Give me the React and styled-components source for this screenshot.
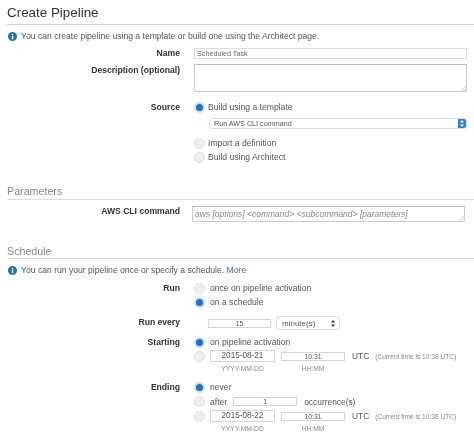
import React from 'react';
import styled, { createGlobalStyle } from 'styled-components';

const GlobalStyle = createGlobalStyle`
  html, body {
    margin: 0;
    padding: 0;
    background: #fff;
    overflow: hidden;
  }
`;

const Page = styled.div`
  width: 474px;
  height: 436px;
  overflow: hidden;
  padding-left: 7px;
  box-sizing: border-box;
  font-family: 'Liberation Sans', Arial, sans-serif;
  font-size: 8.5px;
  color: #444;
  filter: blur(0.35px);
`;

const Title = styled.h1`
  margin: 0;
  height: 25px;
  box-sizing: border-box;
  padding-top: 4px;
  font-size: 13.4px;
  line-height: 17px;
  font-weight: 400;
  color: #333;
  border-bottom: 1px solid #cfcfcf;
`;

const SectionTitle = styled.h2`
  margin: ${(p) => p.$top}px 0 0;
  height: ${(p) => p.$height || 14}px;
  font-size: 10.7px;
  line-height: 13px;
  font-weight: 400;
  color: #888;
  border-bottom: 1px solid #ddd;
`;

const Info = styled.div`
  display: flex;
  align-items: center;
  gap: 4px;
  height: 12px;
  margin-top: ${(p) => p.$top}px;
  padding-left: 1px;
  font-size: 8.6px;
  color: #555;
`;

const More = styled.span`
  color: #3f6fa8;
`;

const Row = styled.div`
  display: grid;
  grid-template-columns: 173px 1fr;
  column-gap: 14px;
  margin-top: ${(p) => p.$top || 0}px;
`;

const Label = styled.div`
  text-align: right;
  font-weight: 700;
  font-size: 8.6px;
  line-height: ${(p) => p.$line || 14}px;
  color: #333;
`;

const Stack = styled.div`
  display: flex;
  flex-direction: column;
  min-width: 0;
`;

const TextInput = styled.div`
  box-sizing: border-box;
  width: 273px;
  height: 11px;
  margin-top: 1px;
  padding-left: 2px;
  border: 1px solid #ddd;
  font-size: 7.2px;
  line-height: 9px;
  color: #666;
`;

const TextArea = styled.div`
  box-sizing: border-box;
  position: relative;
  width: 273px;
  height: ${(p) => p.$height}px;
  margin-left: ${(p) => p.$shift || 0}px;
  padding: 3px 2px;
  border: 1px solid #ccc;
  border-top-color: #bbb;
  font-size: 8.5px;
  font-style: italic;
  line-height: 8px;
  color: #888;
`;

const Grip = styled.svg`
  position: absolute;
  right: 0;
  bottom: 0;
  width: 5px;
  height: 5px;
`;

const Option = styled.div`
  display: flex;
  align-items: center;
  gap: ${(p) => p.$gap || 3}px;
  height: ${(p) => p.$height || 14}px;
  font-size: 8.6px;
  color: #555;
`;

const Radio = styled.span`
  box-sizing: border-box;
  flex: none;
  width: 11px;
  height: 11px;
  border-radius: 50%;
  background: ${(p) => (p.$on ? '#1f72c4' : '#efefef')};
  border: ${(p) => (p.$on ? '2px solid #cfe0f0' : '1px solid #ddd')};
`;

const TemplateSelect = styled.div`
  box-sizing: border-box;
  display: flex;
  align-items: center;
  justify-content: space-between;
  width: 258px;
  height: 11px;
  margin: 4px 0 7px 15px;
  padding-left: 4px;
  border: 1px solid #ddd;
  border-radius: 3px;
  font-size: 7.2px;
  color: #555;
`;

const SelectCap = styled.span`
  display: flex;
  align-items: center;
  justify-content: center;
  width: 8px;
  height: 9px;
  border-radius: 0 2px 2px 0;
  background: #2f7fe0;
`;

const Field = styled.div`
  box-sizing: border-box;
  flex: none;
  width: ${(p) => p.$width}px;
  height: ${(p) => p.$height || 9}px;
  margin-left: ${(p) => p.$left || 0}px;
  border: 1px solid #d5d5d5;
  text-align: center;
  font-size: ${(p) => p.$size || 6.8}px;
  line-height: ${(p) => (p.$height || 9) - 2}px;
  color: #555;
`;

const UnitSelect = styled.div`
  box-sizing: border-box;
  display: flex;
  align-items: center;
  justify-content: space-between;
  width: 64px;
  height: 14px;
  padding: 0 4px 0 5px;
  border: 1px solid #ddd;
  border-radius: 3px;
  font-size: 8px;
  color: #555;
`;

const Utc = styled.span`
  margin-left: 2px;
  font-size: 8.4px;
  color: #555;
`;

const CurrentTime = styled.span`
  margin-left: 1px;
  font-size: 6.6px;
  color: #888;
`;

const Hints = styled.div`
  display: flex;
  height: 10px;
  margin-top: 1px;
  padding-left: 16px;
  font-size: 6.7px;
  line-height: 10px;
  color: #888;
`;

const Hint = styled.span`
  width: ${(p) => p.$width}px;
  text-align: center;
`;

const InfoIcon = () => (
  <svg width="9" height="9" viewBox="0 0 16 16" style={{ flex: 'none' }}>
    <circle cx="8" cy="8" r="8" fill="#1f6fb5" />
    <rect x="6.8" y="7" width="2.6" height="6" fill="#fff" />
    <circle cx="8" cy="4.5" r="1.5" fill="#fff" />
  </svg>
);

const Stepper = ({ color = '#333' }) => (
  <svg width="4" height="7" viewBox="0 0 4 7">
    <path d="M2 0 L4 2.6 H0 Z M2 7 L0 4.4 H4 Z" fill={color} />
  </svg>
);

const ResizeGrip = () => (
  <Grip viewBox="0 0 5 5">
    <path d="M0 5 L5 0 M2.5 5 L5 2.5" stroke="#aaa" strokeWidth="0.6" />
  </Grip>
);

const DateRow = ({ date }) => (
  <Option $gap={5}>
    <Radio />
    <Field $width={65} $height={12} $size={8.2}>{date}</Field>
    <Field $width={64} $left={1}>10:31</Field>
    <Utc>UTC</Utc>
    <CurrentTime>(Current time is 10:38 UTC)</CurrentTime>
  </Option>
);

const DateHints = () => (
  <Hints>
    <Hint $width={65}>YYYY-MM-DD</Hint>
    <Hint $width={76}>HH:MM</Hint>
  </Hints>
);

const App = () => (
  <Page>
    <GlobalStyle />
    <Title>Create Pipeline</Title>
    <Info $top={5}>
      <InfoIcon />
      You can create pipeline using a template or build one using the Architect page.
    </Info>

    <Row $top={5}>
      <Label $line={12}>Name</Label>
      <TextInput>Scheduled Task</TextInput>
    </Row>
    <Row $top={5}>
      <Label $line={12}>Description (optional)</Label>
      <TextArea $height={28}>
        <ResizeGrip />
      </TextArea>
    </Row>
    <Row $top={8}>
      <Label>Source</Label>
      <Stack>
        <Option><Radio $on />Build using a template</Option>
        <TemplateSelect>
          Run AWS CLI command
          <SelectCap><Stepper color="#fff" /></SelectCap>
        </TemplateSelect>
        <Option><Radio />Import a definition</Option>
        <Option><Radio />Build using Architect</Option>
      </Stack>
    </Row>

    <SectionTitle $top={21}>Parameters</SectionTitle>
    <Row $top={6}>
      <Label $line={10}>AWS CLI command</Label>
      <TextArea $height={16} $shift={-2}>
        aws [options] &lt;command&gt; &lt;subcommand&gt; [parameters]
        <ResizeGrip />
      </TextArea>
    </Row>

    <SectionTitle $top={23} $height={13}>Schedule</SectionTitle>
    <Info $top={5}>
      <InfoIcon />
      <span>You can run your pipeline once or specify a schedule. <More>More</More></span>
    </Info>

    <Row $top={5}>
      <Label>Run</Label>
      <Stack>
        <Option $gap={5}><Radio />once on pipeline activation</Option>
        <Option $gap={5}><Radio $on />on a schedule</Option>
      </Stack>
    </Row>
    <Row $top={6}>
      <Label>Run every</Label>
      <Option $height={16} $gap={5}>
        <Field $width={63} $left={14}>15</Field>
        <UnitSelect>minute(s)<Stepper /></UnitSelect>
      </Option>
    </Row>
    <Row $top={4}>
      <Label>Starting</Label>
      <Stack>
        <Option $gap={5}><Radio $on />on pipeline activation</Option>
        <DateRow date="2015-08-21" />
        <DateHints />
      </Stack>
    </Row>
    <Row $top={6}>
      <Label>Ending</Label>
      <Stack>
        <Option $gap={5}><Radio $on />never</Option>
        <Option $gap={5} $height={15}>
          <Radio />after
          <Field $width={64} $left={1}>1</Field>
          <Utc>occurrence(s)</Utc>
        </Option>
        <DateRow date="2015-08-22" />
        <DateHints />
      </Stack>
    </Row>
  </Page>
);

export default App;
